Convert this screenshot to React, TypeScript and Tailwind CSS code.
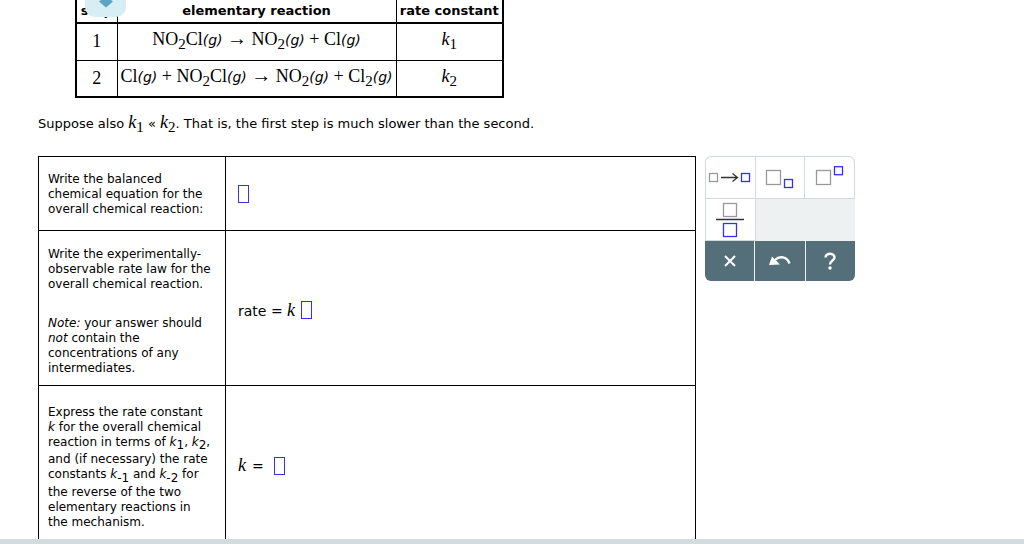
import type { ReactNode } from "react";

function Sub({ children }: { children: ReactNode }) {
  return <span className="relative top-1 text-[15px] leading-none">{children}</span>;
}

function Gas() {
  return <i className="font-['DejaVu_Sans',sans-serif] text-[14px]">(g)</i>;
}

function Arrow() {
  return <span className="text-[20px] leading-none">→</span>;
}

function Blank({ label }: { label: string }) {
  return (
    <input
      type="text"
      aria-label={label}
      className="h-[18px] w-[11px] border border-[#3030ff] bg-white p-0 outline-none"
    />
  );
}

const cell = "border border-black";
const formula = "font-['Liberation_Serif',serif] text-[18px]";

function StepsTable() {
  return (
    <table className="ml-[37px] w-[429px] border-collapse border-2 border-t-0 border-black text-center">
      <thead>
        <tr className="h-[23px] border-b-2 border-black text-[13px]">
          <th className="w-[41px] border-r border-black p-0">step</th>
          <th className="w-[279px] border-r border-black p-0">elementary reaction</th>
          <th className="p-0">rate constant</th>
        </tr>
      </thead>
      <tbody className={formula}>
        <tr className="h-[37px]">
          <td className={cell}>1</td>
          <td className={`${cell} pb-1 whitespace-nowrap`}>
            NO<Sub>2</Sub>Cl<Gas /> <Arrow /> NO<Sub>2</Sub><Gas /> + Cl<Gas />
          </td>
          <td className={`${cell} pb-1`}><i>k</i><Sub>1</Sub></td>
        </tr>
        <tr className="h-[37px]">
          <td className={cell}>2</td>
          <td className={`${cell} pb-1 whitespace-nowrap`}>
            Cl<Gas /> + NO<Sub>2</Sub>Cl<Gas /> <Arrow /> NO<Sub>2</Sub><Gas /> + Cl<Sub>2</Sub><Gas />
          </td>
          <td className={`${cell} pb-1`}><i>k</i><Sub>2</Sub></td>
        </tr>
      </tbody>
    </table>
  );
}

function RateConstant({ index }: { index: string }) {
  return (
    <>
      <i>k</i>
      <sub className="bottom-0 align-sub text-[12px] leading-[13px]">{index}</sub>
    </>
  );
}

function AnswerTable() {
  return (
    <table className="max-w-[658px] flex-1 border-collapse text-left">
      <tbody>
        <tr className="h-[74px]">
          <th className={`${cell} w-[187px] pt-[14px] pr-[13px] pb-3 pl-[9px] text-[12px] leading-[15px] font-normal`}>
            Write the balanced chemical equation for the overall chemical reaction:
          </th>
          <td className={`${cell} px-3`}>
            <div className="flex items-center">
              <Blank label="Overall balanced equation" />
            </div>
          </td>
        </tr>
        <tr className="h-[155px]">
          <th className={`${cell} pt-[14px] pr-[13px] pb-2 pl-[9px] text-[12px] leading-[15px] font-normal`}>
            <p>Write the experimentally-observable rate law for the overall chemical reaction.</p>
            <p className="mt-6">
              <i>Note:</i> your answer should <i>not</i> contain the concentrations of any intermediates.
            </p>
          </th>
          <td className={`${cell} px-3 pt-1`}>
            <div className="flex items-center gap-[6px] text-[14px]">
              <span>rate = <i className={formula}>k</i></span>
              <Blank label="Rate law" />
            </div>
          </td>
        </tr>
        <tr>
          <th className={`${cell} pt-[19px] pr-[13px] pb-3 pl-[9px] text-[12px] leading-[15px] font-normal`}>
            Express the rate constant <i>k</i> for the overall chemical reaction in terms of{" "}
            <RateConstant index="1" />, <RateConstant index="2" />, and (if necessary) the rate
            constants <RateConstant index="-1" /> and <RateConstant index="-2" /> for the reverse
            of the two elementary reactions in the mechanism.
          </th>
          <td className={`${cell} px-3 pt-1`}>
            <div className="flex items-center gap-[10px] text-[14px]">
              <span className="flex items-baseline gap-[6px]"><i className={formula}>k</i> =</span>
              <Blank label="Rate constant k" />
            </div>
          </td>
        </tr>
      </tbody>
    </table>
  );
}

const toolKey = "flex h-[42px] items-center justify-center border-r border-b border-[#d0d9dc] bg-white";
const actionKey = "flex h-[40px] items-center justify-center bg-[#546e7a]";

function Keypad() {
  return (
    <div className="ml-[9px] w-[150px] shrink-0 overflow-hidden rounded-md bg-[#edf1f2]">
      <div className="grid grid-cols-3 rounded-t-md border-t border-l border-[#d0d9dc]">
        <button aria-label="Reaction arrow" className={`${toolKey} rounded-tl-md`}>
          <svg width="44" height="20" fill="none" strokeWidth="1.300">
            <rect x="1.500" y="5.500" width="8" height="8" stroke="#999" />
            <path d="M13 9.500h16M24.500 5.500l5 4-5 4" stroke="#333" />
            <rect x="33.500" y="5.500" width="8" height="8" stroke="#3030ff" />
          </svg>
        </button>
        <button aria-label="Subscript" className={toolKey}>
          <svg width="30" height="24" fill="none" strokeWidth="1.300">
            <rect x="1.500" y="4.500" width="14" height="14" stroke="#999" />
            <rect x="19.500" y="13.500" width="8" height="8" stroke="#3030ff" />
          </svg>
        </button>
        <button aria-label="Superscript" className={`${toolKey} rounded-tr-md`}>
          <svg width="30" height="24" fill="none" strokeWidth="1.300">
            <rect x="1.500" y="4.500" width="14" height="14" stroke="#999" />
            <rect x="19.500" y="0.700" width="8" height="8" stroke="#3030ff" />
          </svg>
        </button>
        <button aria-label="Fraction" className={toolKey}>
          <svg width="30" height="36" fill="none" strokeWidth="1.300">
            <rect x="8.500" y="1.500" width="13" height="13" stroke="#999" />
            <path d="M1 17.500h28" stroke="#333" />
            <rect x="8.500" y="21.500" width="13" height="13" stroke="#3030ff" />
          </svg>
        </button>
      </div>
      <div className="grid grid-cols-3 gap-px">
        <button aria-label="Clear" className={actionKey}>
          <svg width="12" height="12" fill="none" stroke="#fff" strokeWidth="2">
            <path d="M1 1l10 10M11 1L1 11" />
          </svg>
        </button>
        <button aria-label="Undo" className={actionKey}>
          <svg width="24" height="12" fill="none">
            <path d="M7 5C11 1 19 1 21.500 8.500" stroke="#fff" strokeWidth="2.400" />
            <path d="M1 10L4 1.500l8 8z" fill="#fff" />
          </svg>
        </button>
        <button aria-label="Help" className={actionKey}>
          <svg width="14" height="18" fill="none">
            <path d="M2.500 5.500C2.500 0.500 11.500 0.500 11.500 5.500C11.500 8.500 7 8.500 7 12.500" stroke="#fff" strokeWidth="2.400" />
            <circle cx="7" cy="16" r="1.700" fill="#fff" />
          </svg>
        </button>
      </div>
    </div>
  );
}

export default function App() {
  return (
    <div className="flex h-screen flex-col overflow-hidden bg-white font-['DejaVu_Sans',sans-serif] text-black">
      <main className="relative min-h-0 flex-1 overflow-hidden px-[38px]">
        <button
          aria-label="Expand"
          className="absolute top-0 left-[85px] flex h-[17px] w-[41px] justify-center rounded-b-[10px] bg-[#d7eef4]"
        >
          <svg width="14" height="8" fill="#5aa5c3">
            <path d="M2 0h10l2 1.500L7 7.500 0 1.500z" />
          </svg>
        </button>
        <StepsTable />
        <p className="mt-[9px] text-[13px] leading-[30px]">
          Suppose also <span className={formula}><i>k</i><Sub>1</Sub></span> «{" "}
          <span className={formula}><i>k</i><Sub>2</Sub></span>. That is, the first step is much
          slower than the second.
        </p>
        <div className="mt-[17px] flex items-start">
          <AnswerTable />
          <Keypad />
        </div>
      </main>
      <footer className="h-[5px] shrink-0 bg-[#d3dbde]" />
    </div>
  );
}
